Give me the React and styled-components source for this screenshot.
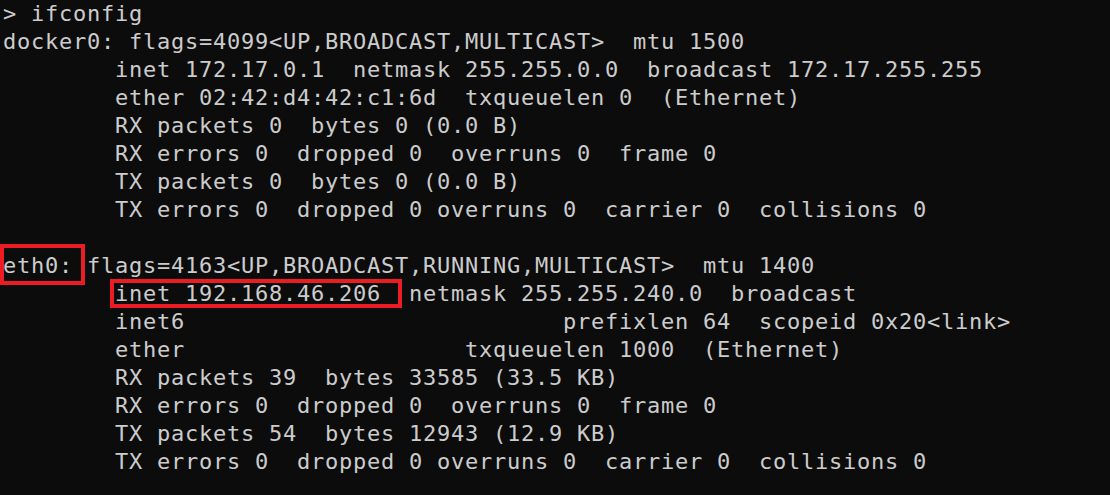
import styled, { createGlobalStyle } from "styled-components";

const GlobalStyle = createGlobalStyle`
  html, body {
    margin: 0;
    padding: 0;
    background: #0c0c0c;
  }
`;

const pad = (n) => " ".repeat(n);

const App = () => {
  const lines = [
    "> ifconfig",
    "docker0: flags=4099<UP,BROADCAST,MULTICAST>  mtu 1500",
    pad(8) + "inet 172.17.0.1  netmask 255.255.0.0  broadcast 172.17.255.255",
    pad(8) + "ether 02:42:d4:42:c1:6d  txqueuelen 0  (Ethernet)",
    pad(8) + "RX packets 0  bytes 0 (0.0 B)",
    pad(8) + "RX errors 0  dropped 0  overruns 0  frame 0",
    pad(8) + "TX packets 0  bytes 0 (0.0 B)",
    pad(8) + "TX errors 0  dropped 0 overruns 0  carrier 0  collisions 0",
    "",
    <>
      <Mark $top={-9} $left={-3} $right={-12} $bottom={-7}>
        eth0:
      </Mark>
      {" flags=4163<UP,BROADCAST,RUNNING,MULTICAST>  mtu 1400"}
    </>,
    <>
      {pad(8)}
      <Mark $top={-2} $left={-5} $right={-21} $bottom={-2}>
        inet 192.168.46.206
      </Mark>
      {"  netmask 255.255.240.0  broadcast"}
    </>,
    pad(8) + "inet6" + pad(27) + "prefixlen 64  scopeid 0x20<link>",
    pad(8) + "ether" + pad(20) + "txqueuelen 1000  (Ethernet)",
    pad(8) + "RX packets 39  bytes 33585 (33.5 KB)",
    pad(8) + "RX errors 0  dropped 0  overruns 0  frame 0",
    pad(8) + "TX packets 54  bytes 12943 (12.9 KB)",
    pad(8) + "TX errors 0  dropped 0 overruns 0  carrier 0  collisions 0",
  ];

  return (
    <>
      <GlobalStyle />
      <Terminal>
        {lines.map((line, index) => (
          <Line key={index}>{line}</Line>
        ))}
      </Terminal>
    </>
  );
};

export default App;

const Terminal = styled.div`
  display: flex;
  flex-direction: column;
  min-height: 495px;
  box-sizing: border-box;
  padding: 0 0 0 3px;
  background: #0c0c0c;
  color: #cccccc;
  font-family: "DejaVu Sans Mono", monospace;
  font-size: 22px;
  letter-spacing: 0.755px;
`;

const Line = styled.div`
  height: 28px;
  line-height: 28px;
  white-space: pre;
`;

// 빨간 박스 표시
const Mark = styled.span`
  position: relative;

  &::after {
    content: "";
    position: absolute;
    top: ${(p) => p.$top}px;
    left: ${(p) => p.$left}px;
    right: ${(p) => p.$right}px;
    bottom: ${(p) => p.$bottom}px;
    border: 4px solid #ec1c24;
    pointer-events: none;
  }
`;
